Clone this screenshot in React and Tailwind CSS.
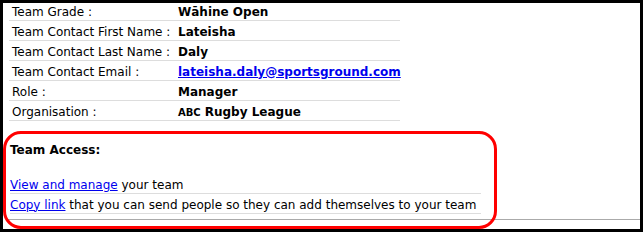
import React from "react";

const rows = [
  { label: "Team Grade :", value: "Wāhine Open" },
  { label: "Team Contact First Name :", value: "Lateisha" },
  { label: "Team Contact Last Name :", value: "Daly" },
  { label: "Team Contact Email :", value: "lateisha.daly@sportsground.com", link: true },
  { label: "Role :", value: "Manager" },
  { label: "Organisation :", value: "Rugby League", prefix: "ABC" },
];

export default function App() {
  return (
    <div
      className="relative w-[643px] h-[232px] overflow-hidden border-[3px] border-black bg-white text-[12px] text-black whitespace-nowrap"
      style={{ fontFamily: '"DejaVu Sans", Verdana, sans-serif' }}
    >
      {/* Team details */}
      <div className="ml-[6px] mt-[-2px] w-[391px]">
        {rows.map((r) => (
          <div key={r.label} className="flex h-[20px] items-center pt-[2px] border-b border-[#dddddd]">
            <span className="w-[169px] shrink-0 pl-[3px]">{r.label}</span>
            {r.link ? (
              <a href="#" className="font-bold text-[#0000ee] underline">
                {r.value}
              </a>
            ) : (
              <span className="font-bold">
                {r.prefix && <span className="mr-[4px] text-[10px]">{r.prefix}</span>}
                {r.value}
              </span>
            )}
          </div>
        ))}
      </div>

      {/* Team access */}
      <div className="mt-[20px] ml-[7px] w-[471px]">
        <div className="h-[20px] font-bold">Team Access:</div>
        <div className="mt-[13px] flex h-[20px] items-center pt-[2px] border-b border-[#dddddd]">
          <a href="#" className="text-[#0000ee] underline">View and manage</a>
          <span>&nbsp;your team</span>
        </div>
        <div className="flex h-[20px] items-center pt-[2px] border-b border-[#dddddd]">
          <a href="#" className="text-[#0000ee] underline">Copy link</a>
          <span>&nbsp;that you can send people so they can add themselves to your team</span>
        </div>
      </div>
      <div className="mt-[5px] ml-[5px] border-b border-[#aaaaaa]" />

      {/* annotation */}
      <div className="pointer-events-none absolute left-0 top-[128px] h-[98px] w-[494px] rounded-[18px] border-[3px] border-[#ff0000]" />
    </div>
  );
}
